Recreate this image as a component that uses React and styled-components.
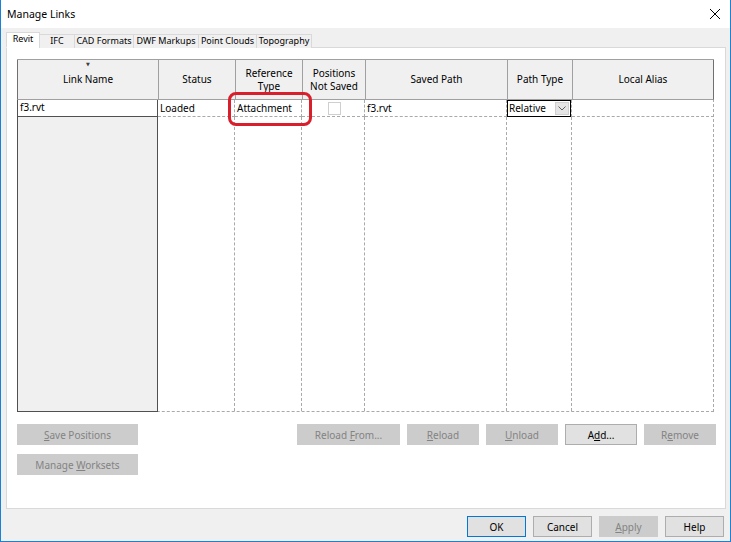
import React from "react";
import styled, { createGlobalStyle } from "styled-components";

const GlobalStyle = createGlobalStyle`
  html, body { margin: 0; padding: 0; background: #ffffff; }
  body { font-family: "Noto Sans", "DejaVu Sans", sans-serif; font-size: 10px; color: #000; }
`;

const Window = styled.div`
  width: 731px;
  height: 542px;
  box-sizing: border-box;
  border: 1px solid #1a82d6;
  border-top: none;
  background: #f0f0f0;
  display: flex;
  flex-direction: column;
`;

const TitleBar = styled.div`
  height: 28px;
  background: #ffffff;
  display: flex;
  align-items: center;
  justify-content: space-between;
  padding: 0 8px 0 6px;
  font-size: 10.5px;
`;

const CloseIcon = styled.svg`
  width: 12px;
  height: 12px;
  margin-right: 1px;
`;

const Body = styled.div`
  flex: 1;
  display: flex;
  flex-direction: column;
  padding: 5px 5px 0 4px;
`;

const TabStrip = styled.div`
  display: flex;
  align-items: flex-end;
  height: 15px;
  margin-left: 1px;
  position: relative;
  z-index: 1;
`;

const Tab = styled.div`
  box-sizing: border-box;
  height: ${(p) => (p.$active ? "16px" : "14px")};
  border: 1px solid #d9d9d9;
  border-bottom: ${(p) => (p.$active ? "1px solid #ffffff" : "none")};
  margin-left: ${(p) => (p.$first ? "0" : "-1px")};
  background: ${(p) => (p.$active ? "#ffffff" : "#f0f0f0")};
  font-size: 9px;
  line-height: 12px;
  white-space: nowrap;
  width: ${(p) => p.$w}px;
  display: flex;
  justify-content: center;
`;

const Panel = styled.div`
  box-sizing: border-box;
  width: 720px;
  height: 462px;
  margin-left: 1px;
  margin-top: -1px;
  background: #ffffff;
  border: 1px solid #d9d9d9;
  padding: 11px 9px 0 10px;
  display: flex;
  flex-direction: column;
`;

const TableWrap = styled.div`
  position: relative;
  width: 697px;
  height: 353px;
`;

const Grid = styled.div`
  display: grid;
  grid-template-columns: 141px 77px 67px 63px 142px 65px 142px;
  grid-template-rows: 40px 17px 1fr;
  width: 697px;
  height: 353px;
  box-sizing: border-box;
  border-top: 1px solid #a0a0a0;
  border-right: 1px dashed #a9a9a9;
  border-bottom: 1px dashed #a9a9a9;
`;

const HeadCell = styled.div`
  position: relative;
  background: #f0f0f0;
  border-left: 1px solid ${(p) => (p.$first ? "#707070" : "#a0a0a0")};
  border-bottom: 1px solid #a0a0a0;
  border-right: ${(p) => (p.$last ? "1px solid #707070" : "none")};
  display: flex;
  align-items: center;
  justify-content: center;
  text-align: center;
  font-size: 10px;
  line-height: 13px;
`;

const SortMark = styled.span`
  position: absolute;
  top: 1px;
  left: 50%;
  transform: translateX(-50%);
  font-size: 5px;
  color: #404040;
  line-height: 6px;
`;

const RowHead = styled.div`
  background: #ffffff;
  border-left: 1px solid #505050;
  border-right: 1px solid #505050;
  border-bottom: 1px solid #505050;
  padding-left: 2px;
  line-height: 15px;
`;

const Cell = styled.div`
  border-right: ${(p) => (p.$noRight ? "none" : "1px dashed #a9a9a9")};
  border-bottom: 1px dashed #a9a9a9;
  padding-left: 2px;
  line-height: 15px;
  display: flex;
  align-items: center;
  justify-content: ${(p) => (p.$center ? "center" : "flex-start")};
  white-space: nowrap;
`;

const EmptyRowHead = styled.div`
  background: #f0f0f0;
  border-left: 1px solid #505050;
  border-right: 1px solid #505050;
  border-bottom: 1px solid #505050;
  margin-bottom: -1px;
`;

const EmptyCell = styled.div`
  border-right: ${(p) => (p.$noRight ? "none" : "1px dashed #a9a9a9")};
`;

const Check = styled.div`
  width: 11px;
  height: 11px;
  border: 1px solid #cfcfcf;
  background: #ffffff;
`;

const SelectBox = styled.div`
  box-sizing: border-box;
  width: 65px;
  height: 17px;
  border: 1px solid #000000;
  display: flex;
  align-items: center;
  justify-content: space-between;
  padding-left: 1px;
  margin-left: -2px;
`;

const SelectBtn = styled.div`
  width: 14px;
  height: 13px;
  margin-right: 1px;
  background: #e5e5e5;
  border: 1px solid #cfcfcf;
  box-sizing: border-box;
  display: flex;
  align-items: center;
  justify-content: center;
`;

const Highlight = styled.div`
  position: absolute;
  left: 211px;
  top: 33px;
  width: 84px;
  height: 34px;
  box-sizing: border-box;
  border: 3px solid #d81f2b;
  border-radius: 8px;
  pointer-events: none;
`;

const ButtonRow = styled.div`
  display: flex;
  gap: 7px;
  margin-top: ${(p) => p.$mt}px;
  align-items: center;
`;

const Spacer = styled.div`
  flex: 1;
`;

const Button = styled.div`
  box-sizing: border-box;
  width: ${(p) => p.$w}px;
  height: 21px;
  display: flex;
  align-items: center;
  justify-content: center;
  font-size: 10px;
  background: ${(p) => (p.$disabled ? "#cccccc" : "#e1e1e1")};
  border: 1px solid ${(p) => (p.$primary ? "#0078d7" : p.$disabled ? "#cccccc" : "#adadad")};
  color: ${(p) => (p.$disabled ? "#838383" : "#000000")};
  white-space: nowrap;
  u { text-decoration: underline; }
`;

const Footer = styled.div`
  display: flex;
  justify-content: flex-end;
  gap: 7px;
  padding-top: 7px;
  padding-right: 1px;
`;

const cols = [
  { label: "Link Name", first: true },
  { label: "Status" },
  { label: "Reference\nType" },
  { label: "Positions\nNot Saved" },
  { label: "Saved Path" },
  { label: "Path Type" },
  { label: "Local Alias", last: true },
];

const tabs = [
  { label: "Revit", w: 34 },
  { label: "IFC", w: 36 },
  { label: "CAD Formats", w: 60 },
  { label: "DWF Markups", w: 66 },
  { label: "Point Clouds", w: 59 },
  { label: "Topography", w: 56 },
];

function Label({ text }) {
  return text.split("\n").map((t, i) => (
    <React.Fragment key={i}>
      {i > 0 && <br />}
      {t}
    </React.Fragment>
  ));
}

export default function App() {
  return (
    <>
      <GlobalStyle />
      <Window>
        <TitleBar>
          <span>Manage Links</span>
          <CloseIcon viewBox="0 0 12 12">
            <path d="M1 1 L11 11 M11 1 L1 11" stroke="#000" strokeWidth="1" fill="none" />
          </CloseIcon>
        </TitleBar>
        <Body>
          <TabStrip>
            {tabs.map((t, i) => (
              <Tab key={t.label} $active={i === 0} $first={i === 0} $w={t.w}>
                {t.label}
              </Tab>
            ))}
          </TabStrip>
          <Panel>
            <TableWrap>
              <Grid>
                {cols.map((c, i) => (
                  <HeadCell key={i} $first={c.first} $last={c.last}>
                    {c.first && <SortMark>▼</SortMark>}
                    <span>
                      <Label text={c.label} />
                    </span>
                  </HeadCell>
                ))}
                <RowHead>f3.rvt</RowHead>
                <Cell>Loaded</Cell>
                <Cell>Attachment</Cell>
                <Cell $center>
                  <Check />
                </Cell>
                <Cell>f3.rvt</Cell>
                <Cell>
                  <SelectBox>
                    Relative
                    <SelectBtn>
                      <svg width="8" height="5" viewBox="0 0 8 5">
                        <path d="M0.5 0.5 L4 4 L7.5 0.5" stroke="#606060" fill="none" strokeWidth="1" />
                      </svg>
                    </SelectBtn>
                  </SelectBox>
                </Cell>
                <Cell $noRight />
                <EmptyRowHead />
                <EmptyCell />
                <EmptyCell />
                <EmptyCell />
                <EmptyCell />
                <EmptyCell />
                <EmptyCell $noRight />
              </Grid>
              <Highlight />
            </TableWrap>
            <ButtonRow $mt={12}>
              <Button $w={121} $disabled>
                <span><u>S</u>ave Positions</span>
              </Button>
              <Spacer />
              <Button $w={103} $disabled>
                <span>Reload <u>F</u>rom...</span>
              </Button>
              <Button $w={72} $disabled>
                <span><u>R</u>eload</span>
              </Button>
              <Button $w={72} $disabled>
                <span><u>U</u>nload</span>
              </Button>
              <Button $w={72}>
                <span>A<u>d</u>d...</span>
              </Button>
              <Button $w={72} $disabled>
                <span>R<u>e</u>move</span>
              </Button>
            </ButtonRow>
            <ButtonRow $mt={9}>
              <Button $w={121} $disabled>
                <span>Manage <u>W</u>orksets</span>
              </Button>
            </ButtonRow>
          </Panel>
          <Footer>
            <Button $w={59} $primary>OK</Button>
            <Button $w={59}>Cancel</Button>
            <Button $w={59} $disabled>
              <span><u>A</u>pply</span>
            </Button>
            <Button $w={59}>Help</Button>
          </Footer>
        </Body>
      </Window>
    </>
  );
}
